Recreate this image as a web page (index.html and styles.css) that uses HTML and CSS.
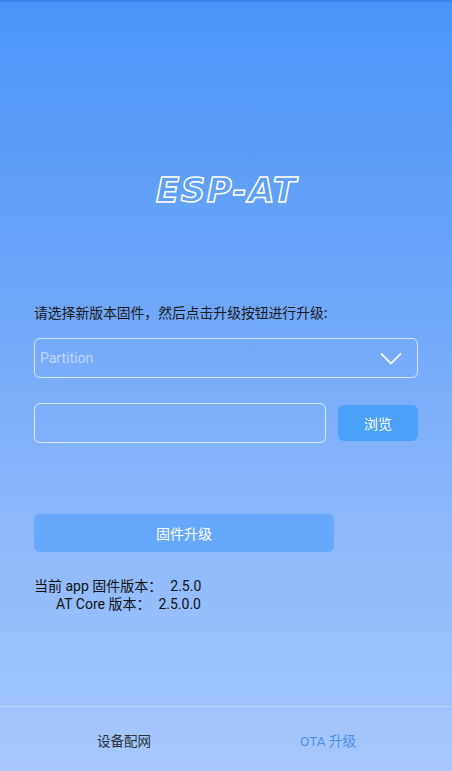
FILE: index.html
```html
<!DOCTYPE html>
<html lang="zh-CN">
<head>
<meta charset="utf-8">
<title>ESP-AT OTA</title>
<link rel="stylesheet" href="styles.css">
</head>
<body>
<div class="screen">
  <div class="status-strip"></div>
  <main class="content">
    <h1 class="logo">ESP-AT</h1>
    <p class="hint">请选择新版本固件，然后点击升级按钮进行升级:</p>
    <div class="select">
      <span class="placeholder">Partition</span>
      <svg class="chevron" width="22" height="14" viewBox="0 0 22 14"><path d="M1.5 2 L11 11.5 L20.5 2" fill="none" stroke="#ffffff" stroke-opacity="0.85" stroke-width="1.8" stroke-linecap="round" stroke-linejoin="round"/></svg>
    </div>
    <div class="file-row">
      <div class="file-input"></div>
      <button class="browse">浏览</button>
    </div>
    <button class="upgrade">固件升级</button>
    <div class="versions">
      <div class="ver-row"><span class="ver-label">当前 app 固件版本：</span><span class="ver-value">2.5.0</span></div>
      <div class="ver-row indent"><span class="ver-label">AT Core 版本：</span><span class="ver-value">2.5.0.0</span></div>
    </div>
  </main>
  <nav class="tabbar">
    <div class="tab">设备配网</div>
    <div class="tab active">OTA 升级</div>
  </nav>
</div>
</body>
</html>
```
FILE: styles.css
```css
* { box-sizing: border-box; }
html, body { margin: 0; padding: 0; }
body {
  font-family: Roboto, "Noto Sans CJK SC", sans-serif;
  width: 452px;
  height: 771px;
  overflow: hidden;
}
.screen {
  width: 452px;
  height: 771px;
  display: flex;
  flex-direction: column;
  background: linear-gradient(180deg, #4a94f7 0%, #6aa5f8 35%, #8db9fb 70%, #a6c8fd 100%);
}
.status-strip {
  height: 2px;
  background: #3b83ea;
  flex: none;
}
.content {
  flex: 1;
  padding: 0 34px;
  display: flex;
  flex-direction: column;
}
.logo {
  margin: 165px 0 0;
  height: 46px;
  line-height: 46px;
  text-align: center;
  font-family: "DejaVu Sans", sans-serif;
  font-weight: 600;
  font-style: italic;
  font-size: 34px;
  letter-spacing: 1.5px;
  padding-left: 1.5px;
  color: transparent;
  -webkit-text-stroke: 1.5px #ffffff;
}
.hint {
  margin: 89px 0 0;
  font-family: "Noto Sans CJK SC", sans-serif;
  font-size: 13.8px;
  line-height: 20px;
  color: #1a1a1a;
}
.select {
  margin-top: 16px;
  height: 40px;
  border: 1px solid rgba(255, 255, 255, 0.7);
  border-radius: 6px;
  display: flex;
  align-items: center;
  justify-content: space-between;
  padding: 0 15px 0 5px;
}
.placeholder {
  font-size: 14px;
  color: rgba(255, 255, 255, 0.55);
}
.chevron { display: block; margin-top: 2px; }
.file-row {
  margin-top: 25px;
  display: flex;
  align-items: center;
  gap: 12px;
}
.file-input {
  width: 292px;
  height: 40px;
  border: 1px solid rgba(255, 255, 255, 0.7);
  border-radius: 6px;
}
.browse {
  width: 80px;
  height: 36px;
  border: none;
  border-radius: 6px;
  background: #4ba0f8;
  color: #ffffff;
  font-family: "Noto Sans CJK SC", sans-serif;
  font-size: 14px;
  padding: 0;
}
.upgrade {
  margin-top: 71px;
  width: 300px;
  height: 38px;
  border: none;
  border-radius: 6px;
  background: #66a8fa;
  color: #ffffff;
  font-family: "Noto Sans CJK SC", sans-serif;
  font-size: 14px;
  padding: 0;
}
.versions {
  margin-top: 25px;
  font-size: 14px;
  color: #111111;
  line-height: 18px;
}
.ver-row { display: flex; }
.ver-row.indent { padding-left: 22px; }
.ver-value { margin-left: 8px; }
.tabbar {
  flex: none;
  height: 65px;
  border-top: 1px solid rgba(255, 255, 255, 0.3);
  display: flex;
  align-items: center;
  padding: 0 22px;
}
.tab {
  flex: 1;
  text-align: center;
  font-size: 13.5px;
  color: #2b2f38;
  padding-top: 1px;
}
.tab.active { color: #4a8fe6; }
```
